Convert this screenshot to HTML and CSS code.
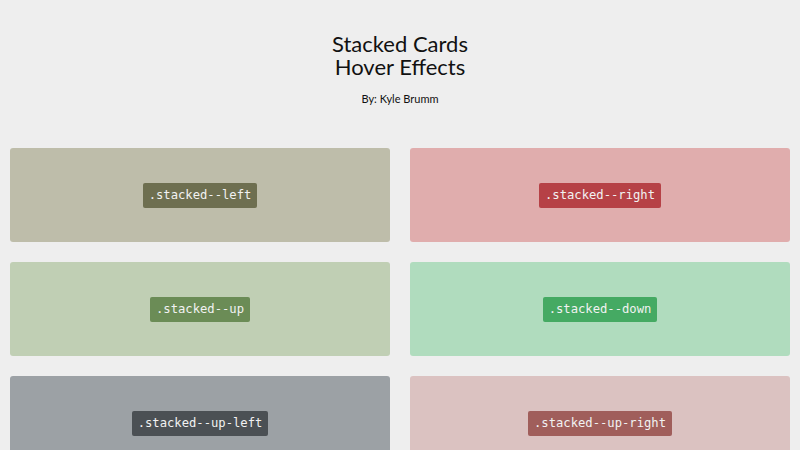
FILE: index.html
```html
<!DOCTYPE html>
<html lang="en">
<head>
    <meta charset="UTF-8">
    <meta name="viewport" content="width=device-width, initial-scale=1.0">
    <title>Stacked Cards Hover Effects</title>
    <link rel="stylesheet" href="styles.css">
</head>
<body>
    <header class="intro">
        <h1>Stacked Cards<br>Hover Effects</h1>
        <p>By: Kyle Brumm</p>
    </header>

    <!-- Card grid -->
    <div class="cards">
        <div class="card card-left"><code>.stacked--left</code></div>
        <div class="card card-right"><code>.stacked--right</code></div>
        <div class="card card-up"><code>.stacked--up</code></div>
        <div class="card card-down"><code>.stacked--down</code></div>
        <div class="card card-up-left"><code>.stacked--up-left</code></div>
        <div class="card card-up-right"><code>.stacked--up-right</code></div>
    </div>
</body>
</html>
```

FILE: styles.css
```css
body {
    font-family: Lato, "Open Sans", sans-serif;
    background-color: #eeeeee;
    color: #111;
    margin: 0;
    padding: 0;
}
.intro {
    text-align: center;
    padding-top: 32px;
}
.intro h1 {
    font-size: 22px;
    font-weight: 400;
    line-height: 23px;
    margin: 0;
}
.intro p {
    font-size: 11px;
    margin: 14px 0 0;
}
.cards {
    display: grid;
    grid-template-columns: 1fr 1fr;
    gap: 20px;
    padding: 0 10px;
    margin-top: 43px;
}
.card {
    height: 94px;
    border-radius: 3px;
    display: flex;
    align-items: center;
    justify-content: center;
}
.card code {
    font-family: "DejaVu Sans Mono", monospace;
    font-size: 12.2px;
    line-height: 17px;
    padding: 4px 6px;
    border-radius: 2px;
    color: #f2f2f2;
}
.card-left { background: #bebdaa; }
.card-left code { background: #6e6f50; }
.card-right { background: #e0adad; }
.card-right code { background: #b64146; }
.card-up { background: #c0cfb4; }
.card-up code { background: #6b8c56; }
.card-down { background: #b0dcbe; }
.card-down code { background: #45aa63; }
.card-up-left { background: #9ca1a5; }
.card-up-left code { background: #4b5054; }
.card-up-right { background: #dbc2c1; }
.card-up-right code { background: #a05e5b; }
```
